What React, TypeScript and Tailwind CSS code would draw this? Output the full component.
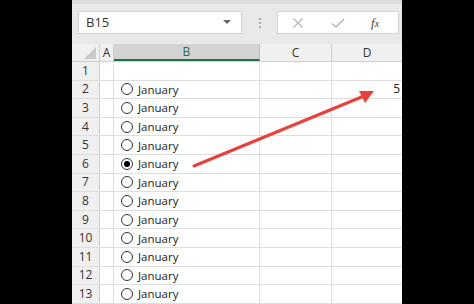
import React from "react";

const ROWS = Array.from({ length: 13 }, (_, i) => i + 1);

function Radio({ checked }: { checked: boolean }) {
  return (
    <span className="w-[12px] h-[12px] rounded-full border border-[#333] flex items-center justify-center shrink-0">
      {checked && <span className="w-[6px] h-[6px] rounded-full bg-black" />}
    </span>
  );
}

export default function App() {
  return (
    <div
      className="w-[474px] h-[304px] bg-black flex overflow-hidden"
      style={{ fontFamily: "'Open Sans', 'Noto Sans', sans-serif" }}
    >
      <div className="w-[72px] shrink-0" />
      <div className="w-[330px] shrink-0 bg-white relative flex flex-col">
        {/* toolbar */}
        <div className="h-[44px] bg-[#e9e9e9] border-t-[4px] border-[#dcdcdc] flex items-start pt-[7px] pl-[6px]">
          <div className="w-[164px] h-[23px] bg-white border border-[#d4d4d4] flex items-center justify-between pl-[7px] pr-[10px]">
            <span className="text-[13px] text-[#333]">B15</span>
            <svg width="8" height="5" viewBox="0 0 8 5">
              <path d="M0 0 L8 0 L4 4 Z" fill="#666" />
            </svg>
          </div>
          <div className="w-[35px] h-[23px] flex items-center justify-center">
            <div className="flex flex-col gap-[2px]">
              <span className="w-[2px] h-[2px] bg-[#aaa]" />
              <span className="w-[2px] h-[2px] bg-[#aaa]" />
              <span className="w-[2px] h-[2px] bg-[#aaa]" />
            </div>
          </div>
          <div className="w-[122px] h-[23px] bg-white border border-[#d4d4d4] flex items-center">
            <svg width="12" height="12" viewBox="0 0 12 12" className="ml-[14px]">
              <path d="M1.5 1.5 L10.5 10.5 M10.5 1.5 L1.5 10.5" stroke="#b5b5b5" strokeWidth="1.3" />
            </svg>
            <svg width="14" height="12" viewBox="0 0 14 12" className="ml-[27px]">
              <path d="M1 6.5 L5 10 L13 2" stroke="#b5b5b5" strokeWidth="1.5" fill="none" />
            </svg>
            <span
              className="ml-[26px] text-[13px] italic text-[#444]"
              style={{ fontFamily: "'Liberation Serif', serif" }}
            >
              f<span className="text-[10px]">x</span>
            </span>
          </div>
        </div>

        {/* column headers */}
        <div className="h-[18px] flex bg-[#f0f0f0] border-b border-[#cfcfcf] text-[12px] text-[#333]">
          <div className="w-[28px] shrink-0 relative border-r border-[#cfcfcf]">
            <svg width="12" height="12" viewBox="0 0 12 12" className="absolute right-[3px] bottom-[2px]">
              <path d="M12 0 L12 12 L0 12 Z" fill="#c9c9c9" />
            </svg>
          </div>
          <div className="w-[14px] shrink-0 flex items-center justify-center border-r border-[#cfcfcf]">A</div>
          <div className="w-[146px] shrink-0 flex items-center justify-center bg-[#d3d3d3] text-[#217346] border-b-2 border-[#217346] border-r border-r-[#bdbdbd]">
            B
          </div>
          <div className="w-[72px] shrink-0 flex items-center justify-center border-r border-[#cfcfcf]">C</div>
          <div className="w-[70px] shrink-0 flex items-center justify-center">D</div>
        </div>

        {/* rows */}
        <div className="flex flex-col">
          {ROWS.map((r) => (
            <div key={r} className="h-[18.6px] flex border-b border-[#dedede]">
              <div className="w-[28px] shrink-0 bg-[#f0f0f0] border-r border-[#cfcfcf] flex items-center justify-center text-[12px] text-[#333]">
                {r}
              </div>
              <div className="w-[14px] shrink-0 border-r border-[#dedede]" />
              <div className="w-[146px] shrink-0 border-r border-[#dedede] flex items-center pl-[7px] gap-[5px]">
                {r > 1 && (
                  <>
                    <Radio checked={r === 6} />
                    <span className="text-[11.5px] text-[#222]">January</span>
                  </>
                )}
              </div>
              <div className="w-[72px] shrink-0 border-r border-[#dedede]" />
              <div className="w-[70px] shrink-0 flex items-center justify-end pr-[2px] text-[12px] text-[#222]">
                {r === 2 ? "5" : null}
              </div>
            </div>
          ))}
        </div>

        {/* arrow overlay */}
        <svg className="absolute left-0 top-0 pointer-events-none" width="330" height="304" viewBox="0 0 330 304">
          <line x1="122" y1="166" x2="292" y2="96" stroke="#e8403a" strokeWidth="3" strokeLinecap="round" />
          <path d="M302 91 L287 91 L293 103 Z" fill="#e8403a" />
        </svg>
      </div>
      <div className="flex-1" />
    </div>
  );
}
